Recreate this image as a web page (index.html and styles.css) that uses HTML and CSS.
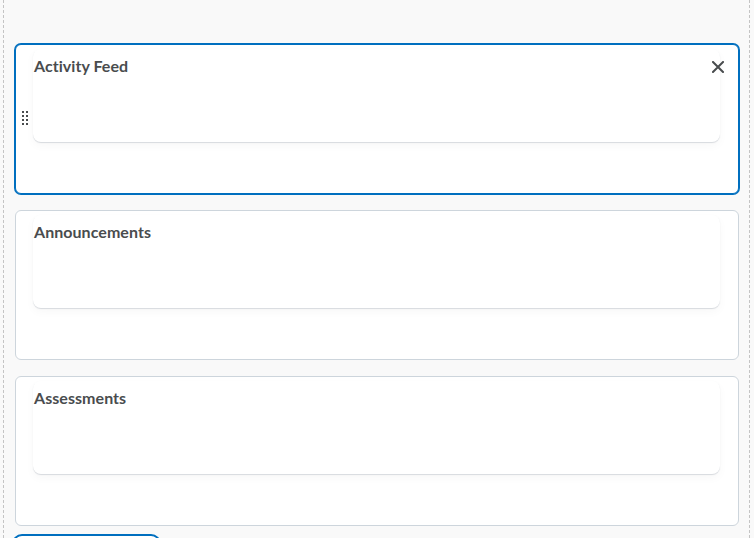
FILE: index.html
```html
<!DOCTYPE html>
<html lang="en">
<head>
<meta charset="utf-8">
<title>Widgets</title>
<link rel="stylesheet" href="styles.css">
</head>
<body>
<div class="column">
  <section class="widget widget-active">
    <div class="widget-body">
      <h2 class="widget-title">Activity Feed</h2>
    </div>
    <button class="close" aria-label="Remove widget">
      <svg width="12" height="12" viewBox="0 0 12 12"><path d="M1 1L11 11M11 1L1 11" stroke="#494c4e" stroke-width="2" fill="none" stroke-linecap="square"/></svg>
    </button>
    <span class="handle" aria-hidden="true">
      <svg width="6" height="14" viewBox="0 0 6 14"><g fill="#494c4e"><rect x="0" y="0" width="2" height="2"/><rect x="4" y="0" width="2" height="2"/><rect x="0" y="4" width="2" height="2"/><rect x="4" y="4" width="2" height="2"/><rect x="0" y="8" width="2" height="2"/><rect x="4" y="8" width="2" height="2"/><rect x="0" y="12" width="2" height="2"/><rect x="4" y="12" width="2" height="2"/></g></svg>
    </span>
  </section>
  <section class="widget">
    <div class="widget-body">
      <h2 class="widget-title">Announcements</h2>
    </div>
  </section>
  <section class="widget">
    <div class="widget-body">
      <h2 class="widget-title">Assessments</h2>
    </div>
  </section>
  <button class="add-button"></button>
</div>
</body>
</html>
```

FILE: styles.css
```css
html, body {
  margin: 0;
  padding: 0;
  background: #f9f9f9;
  font-family: Lato, "Noto Sans", sans-serif;
  overflow: hidden;
}

.column {
  margin-left: 3px;
  width: 747px;
  height: 538px;
  overflow: hidden;
  border-left: 1px dashed #c4c4c4;
  border-right: 1px dashed #c4c4c4;
  padding: 44px 10px 0 11px;
  box-sizing: border-box;
  display: flex;
  flex-direction: column;
  gap: 16px;
}

.widget {
  position: relative;
  flex: none;
  box-sizing: border-box;
  height: 150px;
  background: #fff;
  border: 1px solid #cdd5dc;
  border-radius: 6px;
  padding: 4px 18px 0 17px;
}

.widget-active {
  border-color: #006fbf;
  box-shadow: 0 0 0 1px #006fbf;
}

.widget-body {
  height: 93px;
  box-sizing: border-box;
  padding: 7px 1px 0;
  border-radius: 8px;
  background: #fff;
  box-shadow: 0 1px 1px rgba(60, 80, 100, 0.18), 0 4px 10px rgba(0, 0, 0, 0.03);
}

.widget-title {
  margin: 0;
  font-size: 16px;
  line-height: 20px;
  font-weight: 700;
  letter-spacing: 0.05px;
  color: #494c4e;
}

.close {
  position: absolute;
  top: 16px;
  right: 14px;
  width: 12px;
  height: 12px;
  padding: 0;
  border: 0;
  background: none;
  display: flex;
}

.handle {
  position: absolute;
  left: 6px;
  top: 66px;
  display: flex;
}

.add-button {
  margin: -8px 0 0 -3px;
  width: 149px;
  height: 40px;
  flex: none;
  border: 2px solid #006fbf;
  border-radius: 10px;
  background: #fff;
}
```
